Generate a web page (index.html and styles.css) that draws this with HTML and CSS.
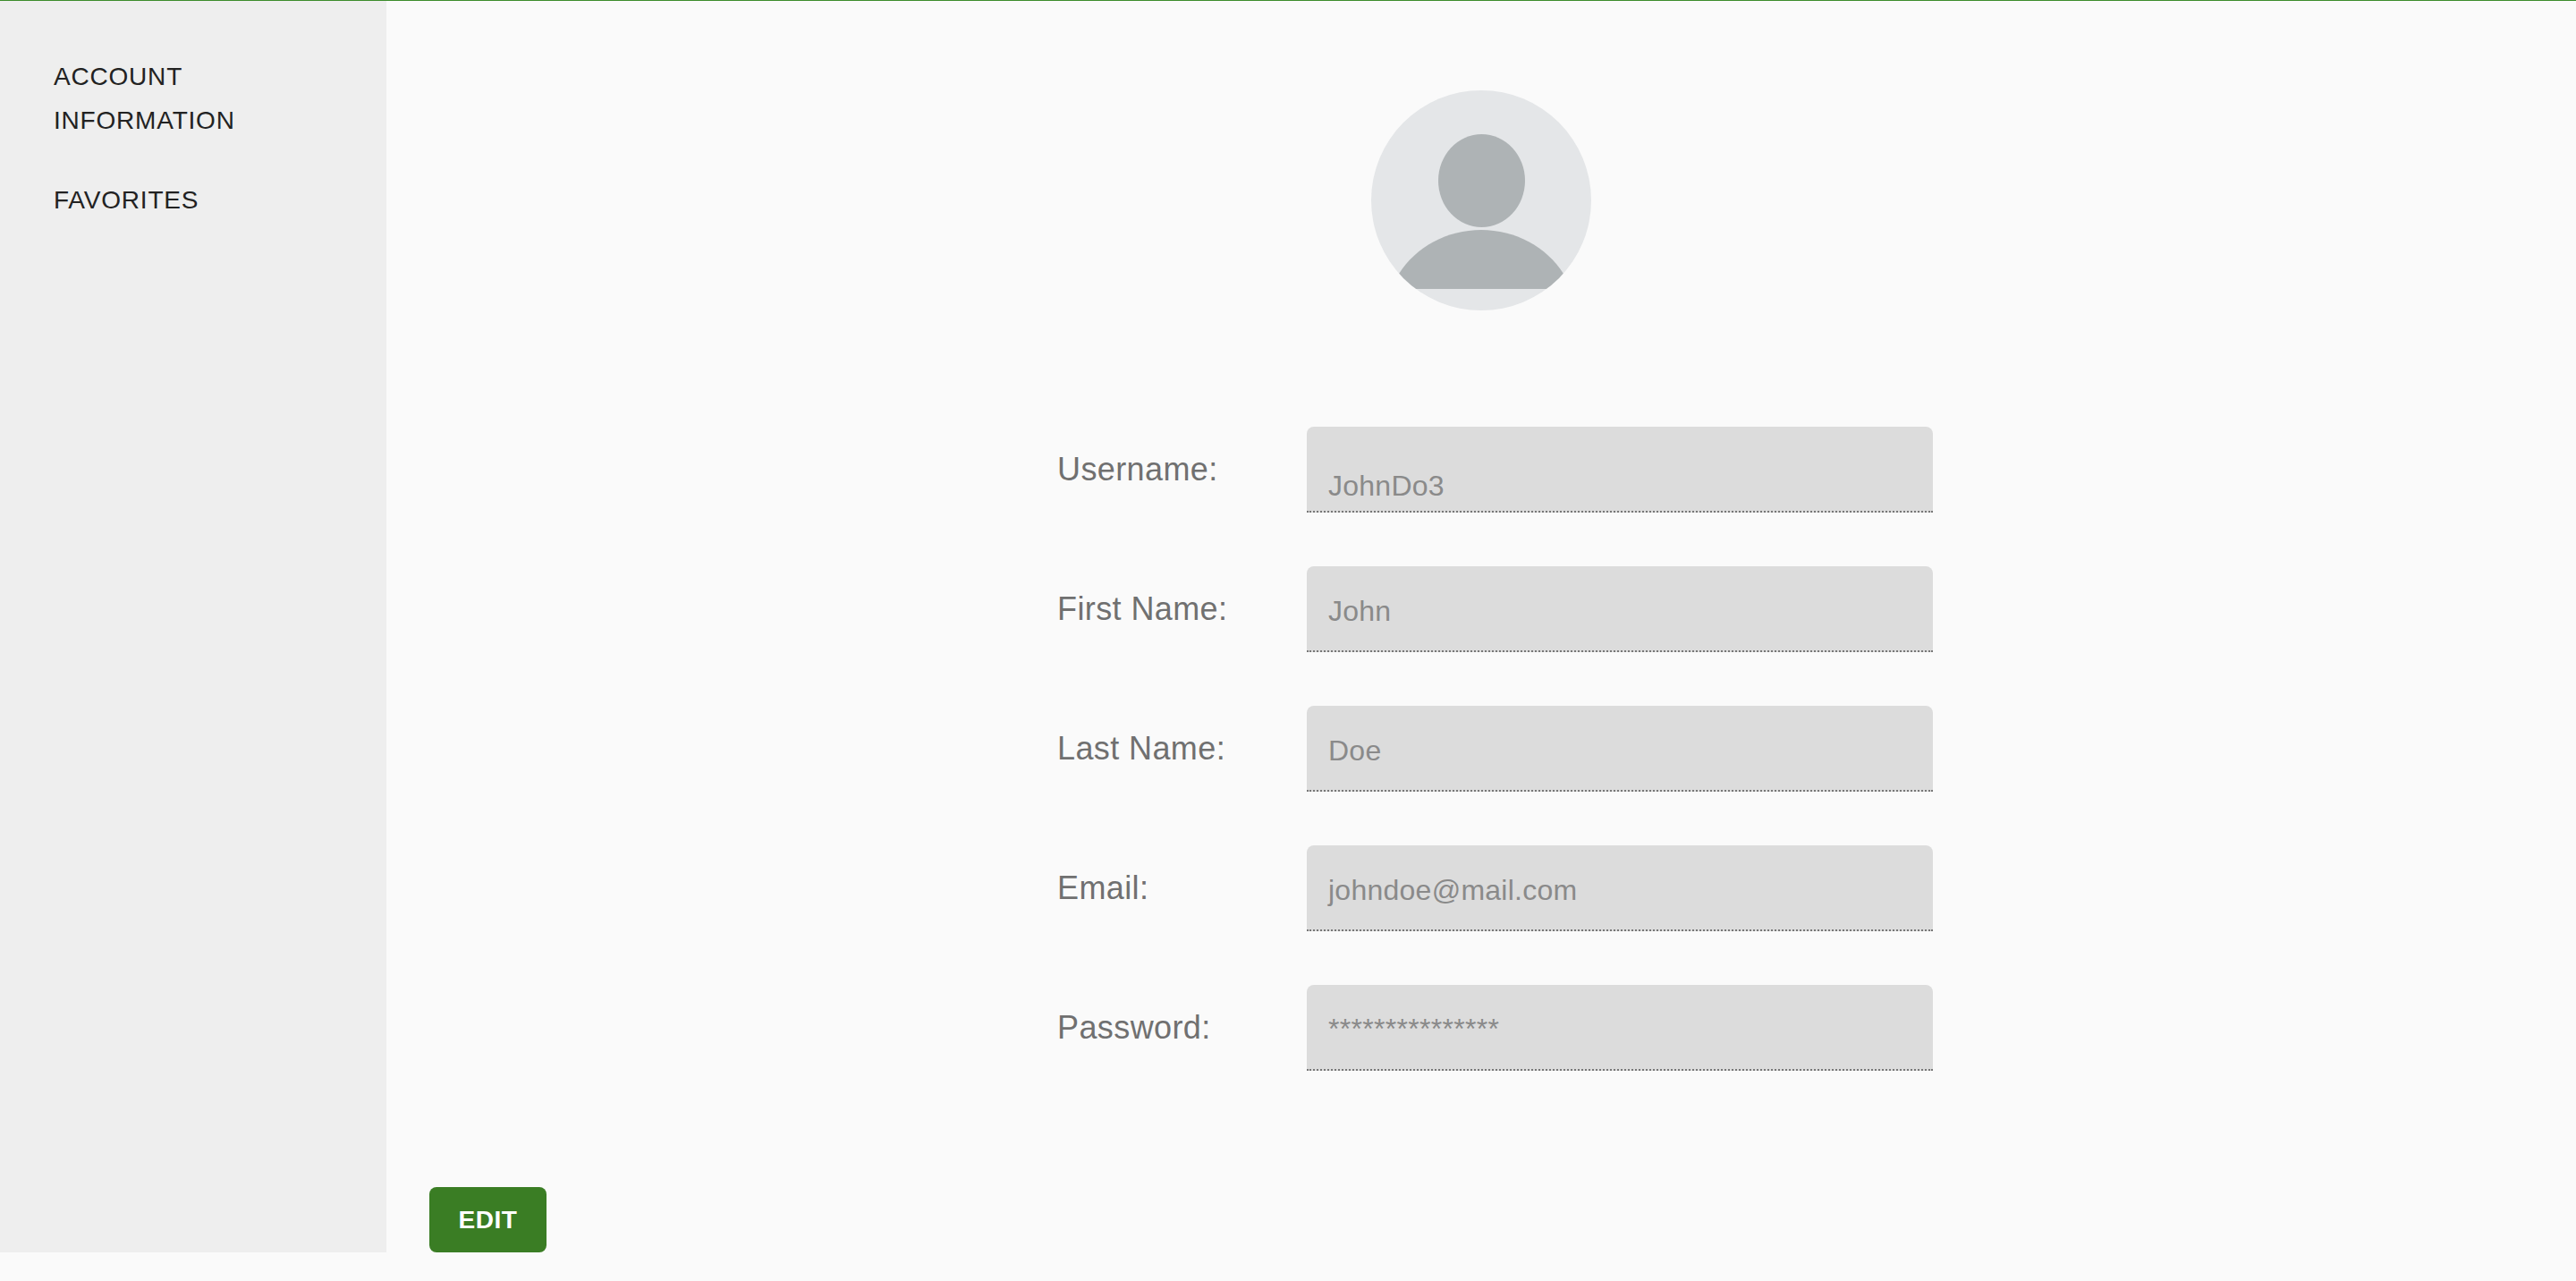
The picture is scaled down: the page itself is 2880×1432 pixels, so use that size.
FILE: index.html
```html
<!DOCTYPE html>
<html lang="en">
<head>
<meta charset="utf-8">
<title>Account information</title>
<link rel="stylesheet" href="styles.css">
</head>
<body>
<div class="app">
  <nav class="sidebar">
    <a class="nav-link">ACCOUNT INFORMATION</a>
    <a class="nav-link">FAVORITES</a>
  </nav>
  <main class="main">
    <svg class="avatar" viewBox="0 0 246 246" role="img" aria-label="User avatar">
      <defs><clipPath id="avatar-clip"><circle cx="123" cy="123" r="123"/></clipPath></defs>
      <circle cx="123" cy="123" r="123" fill="#e4e6e8"/>
      <g clip-path="url(#avatar-clip)" fill="#aeb3b5">
        <ellipse cx="123.5" cy="101" rx="48.5" ry="52"/>
        <path d="M31 205 C50 175 85 156 123 156 C161 156 196 175 215 205 L215 222 L31 222 Z"/>
      </g>
    </svg>
    <form class="form">
      <label class="label">Username:</label>
      <div class="field field-low">JohnDo3</div>
      <label class="label">First Name:</label>
      <div class="field">John</div>
      <label class="label">Last Name:</label>
      <div class="field">Doe</div>
      <label class="label">Email:</label>
      <div class="field">johndoe@mail.com</div>
      <label class="label">Password:</label>
      <div class="field field-secret">***************</div>
    </form>
    <button class="edit" type="button">EDIT</button>
  </main>
</div>
</body>
</html>
```

FILE: styles.css
```css
* { box-sizing: border-box; }
html, body { margin: 0; height: 100%; }
body {
  background: #fafafa;
  font-family: "Liberation Sans", Arial, sans-serif;
}
.app {
  display: flex;
  height: 1400px;
  border-top: 1px solid #3c8c2c;
}
.sidebar {
  width: 432px;
  flex: none;
  background: #eeeeee;
  padding: 60px 60px 0;
  display: flex;
  flex-direction: column;
  gap: 40px;
}
.nav-link {
  display: block;
  font-size: 28px;
  line-height: 49px;
  letter-spacing: 0.8px;
  color: #222222;
}
.main {
  flex: 1;
  display: flex;
  flex-direction: column;
  padding-top: 100px;
  min-width: 0;
}
.avatar {
  width: 246px;
  height: 246px;
  align-self: center;
  flex: none;
}
.form {
  display: grid;
  grid-template-columns: 279px 700px;
  grid-auto-rows: 96px;
  row-gap: 60px;
  margin: 130px 0 0 750px;
  align-items: center;
}
.label {
  font-size: 36px;
  letter-spacing: 0.4px;
  color: #707070;
  line-height: 40px;
}
.field {
  height: 96px;
  background: #dcdcdc;
  border-bottom: 2px dotted #777777;
  border-radius: 8px 8px 0 0;
  padding: 31px 24px 0;
  font-size: 32px;
  line-height: 38px;
  letter-spacing: 0.25px;
  color: #8a8a8a;
}
.field-low { padding-top: 47px; }
.field-secret { padding-top: 30px; letter-spacing: 0.3px; }
.edit {
  align-self: flex-start;
  margin: auto 0 0 48px;
  width: 131px;
  height: 73px;
  border: 0;
  border-radius: 8px;
  background: #3a7d24;
  color: #ffffff;
  font: bold 28px "Liberation Sans", Arial, sans-serif;
  letter-spacing: 0.5px;
  padding: 0;
}
```
